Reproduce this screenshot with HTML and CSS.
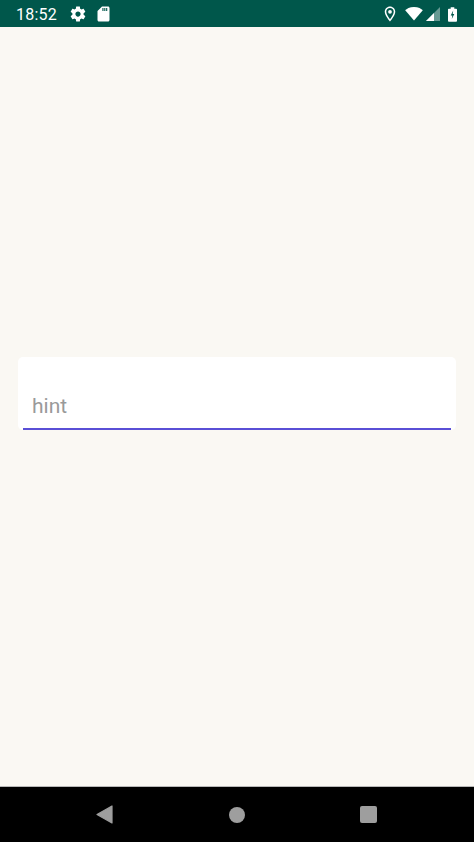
FILE: index.html
```html
<!DOCTYPE html>
<html lang="en">
<head>
<meta charset="utf-8">
<title>hint</title>
<link rel="stylesheet" href="styles.css">
</head>
<body>
<div class="screen">
  <header class="status">
    <div class="status-left">
      <span class="time">18:52</span>
      <svg class="ic gear" viewBox="0 0 24 24"><path fill="#fff" d="M19.43 12.98c.04-.32.07-.64.07-.98s-.03-.66-.07-.98l2.11-1.65c.19-.15.24-.42.12-.64l-2-3.46c-.12-.22-.39-.3-.61-.22l-2.49 1c-.52-.4-1.08-.73-1.69-.98l-.38-2.65C14.46 2.18 14.25 2 14 2h-4c-.25 0-.46.18-.49.42l-.38 2.65c-.61.25-1.17.59-1.69.98l-2.49-1c-.23-.09-.49 0-.61.22l-2 3.46c-.13.22-.07.49.12.64l2.11 1.65c-.04.32-.07.65-.07.98s.03.66.07.98l-2.11 1.65c-.19.15-.24.42-.12.64l2 3.46c.12.22.39.3.61.22l2.49-1c.52.4 1.08.73 1.69.98l.38 2.65c.03.24.24.42.49.42h4c.25 0 .46-.18.49-.42l.38-2.65c.61-.25 1.17-.59 1.69-.98l2.49 1c.23.09.49 0 .61-.22l2-3.46c.12-.22.07-.49-.12-.64l-2.11-1.65zM12 15.5c-1.93 0-3.5-1.57-3.5-3.5s1.57-3.5 3.5-3.5 3.5 1.57 3.5 3.5-1.57 3.5-3.5 3.5z"/></svg>
      <svg class="ic sd" viewBox="0 0 24 24"><path fill="#fff" d="M18 2h-8L4 8v12c0 1.1.9 2 2 2h12c1.1 0 2-.9 2-2V4c0-1.1-.9-2-2-2zm-6 6h-1.500V4H12v4zm2.500 0H13V4h1.500v4zM17 8h-1.500V4H17v4z"/></svg>
    </div>
    <div class="status-right">
      <svg class="ic pin" viewBox="0 0 24 24"><path fill="#fff" d="M12 2C8.13 2 5 5.13 5 9c0 5.25 7 13 7 13s7-7.750 7-13c0-3.870-3.130-7-7-7zm0 2c2.760 0 5 2.240 5 5 0 2.880-2.880 7.190-5 9.880C9.920 16.210 7 11.850 7 9c0-2.760 2.240-5 5-5z"/><circle fill="#fff" cx="12" cy="9" r="2.500"/></svg>
      <svg class="wifi" viewBox="0 0 18 14"><path fill="#fff" d="M9 13.500.2 3.200C1.600 1.900 4.700 0 9 0s7.400 1.900 8.800 3.200z"/></svg>
      <svg class="signal" viewBox="0 0 14 14"><path fill="#fff" fill-opacity=".4" d="M14 0v14H0z"/><path fill="#fff" d="M8 6v8H0z"/></svg>
      <svg class="battery" viewBox="0 0 10 16"><path fill="#fff" d="M3 0h4v1.500h2a1 1 0 0 1 1 1V15a1 1 0 0 1-1 1H1a1 1 0 0 1-1-1V2.500a1 1 0 0 1 1-1h2z"/><path fill="#00574b" d="M5.800 3.500 3 9h1.800l-.6 4L7 7.500H5.200z"/></svg>
    </div>
  </header>
  <main class="content">
    <div class="card">
      <div class="field"><span class="hint">hint</span></div>
    </div>
  </main>
  <nav class="navbar">
    <svg class="nav-back" viewBox="0 0 17 19"><path fill="#9e9e9e" stroke="#9e9e9e" stroke-width="1.200" stroke-linejoin="round" d="M16 1v17L1 9.500z"/></svg>
    <span class="nav-home"></span>
    <span class="nav-recent"></span>
  </nav>
</div>
</body>
</html>
```
FILE: styles.css
```css
* { box-sizing: border-box; }
html, body { margin: 0; padding: 0; }
body { width: 474px; height: 842px; overflow: hidden; font-family: Roboto, "Liberation Sans", sans-serif; }
.screen { width: 474px; height: 842px; display: flex; flex-direction: column; background: #faf8f3; }
.status { height: 27px; flex: none; background: #00574b; color: #fff; display: flex; justify-content: space-between; align-items: center; padding: 1px 16px 0 16px; }
.status-left, .status-right { display: flex; align-items: center; }
.time { font-size: 16px; letter-spacing: 0.200px; color: #fff; }
.ic { display: block; }
.gear { width: 18px; height: 18px; margin-left: 12px; }
.sd { width: 19px; height: 18px; margin-left: 7px; }
.pin { width: 18px; height: 18px; margin-right: 6px; }
.wifi { width: 18px; height: 14px; margin-right: 3px; }
.signal { width: 14px; height: 14px; margin-right: 8px; }
.battery { width: 9px; height: 15px; margin-right: 1px; }
.content { flex: 1; padding: 330px 18px 0; }
.card { height: 73px; background: #fff; border-radius: 5px; padding: 0 5px; display: flex; flex-direction: column; justify-content: flex-end; }
.field { height: 44px; border-bottom: 2px solid #5a4fd6; padding: 0 9px 2px; display: flex; align-items: center; }
.hint { font-size: 21px; color: #9a9a9a; line-height: 24px; }
.navbar { height: 56px; flex: none; background: #000; display: flex; align-items: center; padding-left: 96px; border-top: 1px solid #b8b8b8; }
.nav-back { width: 17px; height: 19px; display: block; }
.nav-home { width: 16px; height: 16px; border-radius: 50%; background: #9e9e9e; margin-left: 116px; }
.nav-recent { width: 17px; height: 17px; border-radius: 2px; background: #9e9e9e; margin-left: 115px; }
```
